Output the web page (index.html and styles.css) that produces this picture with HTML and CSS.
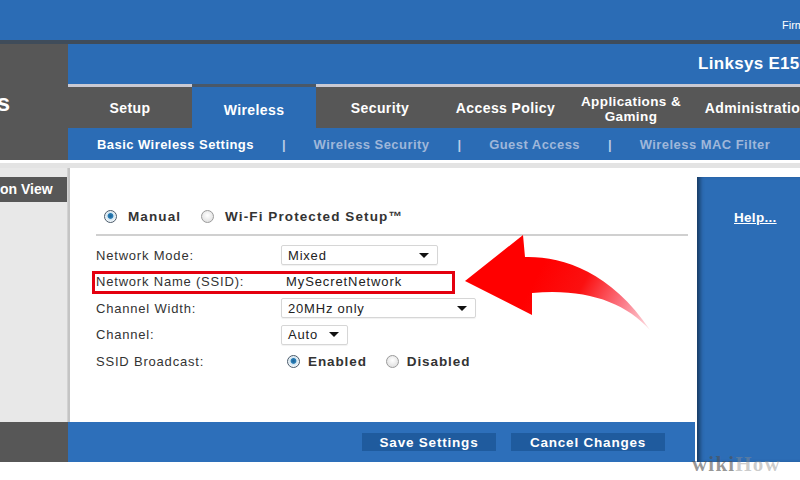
FILE: index.html
```html
<!DOCTYPE html>
<html lang="en">
<head>
    <meta charset="UTF-8">
    <meta name="viewport" content="width=device-width, initial-scale=1.0">
    <link rel="stylesheet" href="styles.css">
    <title>Basic Wireless Settings</title>
</head>
<body>
    <div class="page">
        <div class="topbar">
            <span class="firmware">Firmware Version: 1.0.00</span>
        </div>
        <div class="header">
            <div class="side-dark">
                <span class="side-title">Wireless</span>
            </div>
            <div class="header-main">
                <div class="model">Linksys E1500</div>
                <div class="tabs">
                    <div class="tab tab-setup">Setup</div>
                    <div class="tab tab-wireless active">Wireless</div>
                    <div class="tab tab-security">Security</div>
                    <div class="tab tab-access">Access Policy</div>
                    <div class="tab tab-apps">Applications &amp;<br>Gaming</div>
                    <div class="tab tab-admin">Administration</div>
                </div>
                <div class="subnav">
                    <span class="sub-item current">Basic Wireless Settings</span>
                    <span class="sep">|</span>
                    <span class="sub-item">Wireless Security</span>
                    <span class="sep">|</span>
                    <span class="sub-item">Guest Access</span>
                    <span class="sep">|</span>
                    <span class="sub-item">Wireless MAC Filter</span>
                </div>
            </div>
        </div>
        <div class="gap"></div>
        <div class="main">
            <div class="side-light">
                <div class="view-label">on View</div>
            </div>
            <div class="content">
                <div class="mode-row">
                    <span class="radio checked"></span>
                    <span class="radio-label">Manual</span>
                    <span class="radio wps"></span>
                    <span class="radio-label">Wi-Fi Protected Setup™</span>
                </div>
                <div class="rule"></div>
                <div class="form">
                    <div class="label">Network Mode:</div>
                    <div class="field"><div class="select w-mode"><span>Mixed</span><i class="caret"></i></div></div>

                    <div class="label">Network Name (SSID):</div>
                    <div class="field"><div class="text-input">MySecretNetwork</div></div>

                    <div class="label">Channel Width:</div>
                    <div class="field"><div class="select w-width"><span>20MHz only</span><i class="caret"></i></div></div>

                    <div class="label">Channel:</div>
                    <div class="field"><div class="select w-channel"><span>Auto</span><i class="caret"></i></div></div>

                    <div class="label">SSID Broadcast:</div>
                    <div class="field broadcast">
                        <span class="radio checked"></span>
                        <span class="radio-label">Enabled</span>
                        <span class="radio second"></span>
                        <span class="radio-label">Disabled</span>
                    </div>
                </div>
                <div class="highlight"></div>
                <svg class="arrow" width="200" height="110" viewBox="0 0 200 110">
                    <defs>
                        <linearGradient id="arrowFade" gradientUnits="userSpaceOnUse" x1="80" y1="40" x2="192" y2="100">
                            <stop offset="0" stop-color="#ff0000"/>
                            <stop offset="0.35" stop-color="#fb1010"/>
                            <stop offset="0.7" stop-color="#fb7a88"/>
                            <stop offset="1" stop-color="#fde6ea"/>
                        </linearGradient>
                    </defs>
                    <path d="M5,51 L63,5 L65,27 C100,26 150,40 190,100 C165,72 125,58 72,63 L72,85 Z" fill="url(#arrowFade)"/>
                </svg>
            </div>
            <div class="help">
                <a class="help-link">Help...</a>
            </div>
            <div class="side-foot"></div>
            <div class="footer">
                <div class="btn btn-save">Save Settings</div>
                <div class="btn btn-cancel">Cancel Changes</div>
            </div>
        </div>
        <div class="watermark"><span class="wm-wiki">wiki</span><span class="wm-how">How</span></div>
    </div>
</body>
</html>
```

FILE: styles.css
```css
body {
    margin: 0;
    padding: 0;
    background-color: #fff;
    font-family: "Liberation Sans", Arial, sans-serif;
    overflow: hidden;
}

.page {
    width: 800px;
    height: 480px;
    position: relative;
    overflow: hidden;
}

/* barra superior */
.topbar {
    height: 40px;
    background-color: #2b6cb5;
    border-bottom: 4px solid #3f4c5a;
    display: flex;
    align-items: flex-end;
    padding-left: 782px;
    white-space: nowrap;
}

.firmware {
    color: #fff;
    font-size: 11px;
    padding-bottom: 9px;
}

.header {
    display: flex;
    height: 116px;
}

.side-dark {
    width: 68px;
    flex-shrink: 0;
    background-color: #575757;
    display: flex;
    justify-content: flex-end;
    align-items: center;
    padding-right: 58px;
    box-sizing: border-box;
    overflow: hidden;
    white-space: nowrap;
}

.side-title {
    color: #fff;
    font-size: 24px;
    font-weight: bold;
    margin-top: 2px;
}

.header-main {
    flex: 1;
    min-width: 0;
}

.model {
    height: 40px;
    background-color: #2b6cb5;
    padding-left: 630px;
    display: flex;
    align-items: center;
    color: #fff;
    font-size: 17px;
    font-weight: bold;
    white-space: nowrap;
    letter-spacing: 0.3px;
}

.tabs {
    display: flex;
    height: 44px;
    background-color: #575757;
    white-space: nowrap;
}

.tab {
    flex-shrink: 0;
    box-sizing: border-box;
    border-top: 3px solid #c9c9d2;
    color: #fff;
    font-size: 14px;
    font-weight: bold;
    letter-spacing: 0.4px;
    display: flex;
    align-items: center;
    justify-content: center;
    text-align: center;
    line-height: 15px;
    padding-top: 1px;
}

.tab.active {
    background-color: #2b6cb5;
    border-top-color: #4a5868;
    padding-top: 6px;
}

.tab-setup { width: 124px; }
.tab-wireless { width: 124px; }
.tab-security { width: 128px; }
.tab-access { width: 123px; }
.tab-apps { width: 128px; font-size: 13.5px; padding-top: 3px; }
.tab-admin { width: 124px; }

.subnav {
    height: 32px;
    background-color: #2b6cb5;
    display: flex;
    align-items: center;
    gap: 28px;
    padding-left: 29px;
    font-size: 13px;
    font-weight: bold;
    white-space: nowrap;
}

.sub-item {
    color: #9fb7da;
    letter-spacing: 0.45px;
}

.sub-item.current {
    color: #fff;
}

.sep {
    color: #b9cbe6;
}

.gap {
    height: 8px;
    background: linear-gradient(#fff 0, #fff 3px, #e3e3e3 3px);
}

.main {
    display: grid;
    grid-template-columns: 68px 627px 1fr;
    grid-template-rows: 254px 40px;
}

.side-light {
    background-color: #e8e8e8;
    padding-top: 9px;
    border-right: 1px solid #d2d2d2;
}

.view-label {
    height: 25px;
    line-height: 25px;
    background-color: #575757;
    color: #fff;
    font-size: 14px;
    font-weight: bold;
    white-space: nowrap;
}

.content {
    background-color: #fff;
    border-left: 2px solid #c4c4c4;
    position: relative;
    padding-left: 26px;
    padding-right: 7px;
}

.mode-row {
    display: flex;
    align-items: center;
    height: 20px;
    margin-top: 38px;
    padding-left: 8px;
}

.radio {
    width: 13px;
    height: 13px;
    border-radius: 50%;
    box-sizing: border-box;
    border: 1px solid #9a9a9a;
    background: radial-gradient(circle at 50% 40%, #ffffff 0, #e4e4e4 70%);
    flex-shrink: 0;
}

.radio.checked {
    border-color: #4a5a6a;
    background: radial-gradient(circle at 50% 45%, #1a5f94 0, #2b7fb8 30%, #cfe3ef 40%, #f4f8fb 70%);
}

.radio-label {
    font-size: 13.5px;
    font-weight: bold;
    color: #333;
    letter-spacing: 1.1px;
    margin-left: 11px;
}

.radio.wps {
    margin-left: 20px;
}

.rule {
    height: 2px;
    background-color: #d0d0d0;
    margin-top: 8px;
}

.form {
    display: grid;
    grid-template-columns: 185px auto;
    grid-auto-rows: 26.5px;
    margin-top: 6px;
    align-items: center;
}

.label {
    font-size: 13px;
    color: #333;
    letter-spacing: 0.8px;
}

.field {
    display: flex;
    align-items: center;
}

.select {
    height: 20px;
    box-sizing: border-box;
    border: 1px solid #d6d6d6;
    border-radius: 2px;
    box-shadow: 0 1px 1px rgba(0, 0, 0, 0.06);
    padding: 0 8px 0 6px;
    display: flex;
    align-items: center;
    justify-content: space-between;
    font-size: 13px;
    color: #222;
    letter-spacing: 0.8px;
}

.w-mode { width: 157px; }
.w-width { width: 195px; }
.w-channel { width: 67px; }

.caret {
    width: 0;
    height: 0;
    border-left: 5px solid transparent;
    border-right: 5px solid transparent;
    border-top: 5px solid #111;
}

.text-input {
    width: 168px;
    height: 20px;
    line-height: 20px;
    padding-left: 5px;
    font-size: 13px;
    color: #222;
    letter-spacing: 0.9px;
}

.broadcast {
    padding-left: 6px;
}

.broadcast .radio-label {
    margin-left: 8px;
    letter-spacing: 0.9px;
}

.radio.second {
    margin-left: 19px;
}

/* anotaciones sobre la captura */
.highlight {
    position: absolute;
    left: 22px;
    top: 103px;
    width: 363px;
    height: 23px;
    box-sizing: border-box;
    border: 3px solid #e4000f;
}

.arrow {
    position: absolute;
    left: 390px;
    top: 62px;
}

.help {
    grid-row: 1 / span 2;
    grid-column: 3;
    margin-top: 9px;
    margin-left: 2px;
    background-color: #2c6db6;
    box-shadow: inset 5px 0 4px -2px #183a62;
    padding-top: 31px;
    padding-left: 37px;
}

.help-link {
    color: #fff;
    font-size: 13.5px;
    font-weight: bold;
    text-decoration: underline;
    letter-spacing: 0.3px;
}

.side-foot {
    background-color: #575757;
}

.footer {
    background-color: #2d6fba;
    display: flex;
    align-items: center;
    padding-left: 294px;
    gap: 15px;
}

.btn {
    height: 18px;
    background-color: #1f5b9e;
    color: #fff;
    font-size: 13.5px;
    font-weight: bold;
    letter-spacing: 0.8px;
    display: flex;
    align-items: center;
    justify-content: center;
}

.btn-save { width: 134px; }
.btn-cancel { width: 154px; }

.watermark {
    position: absolute;
    left: 692px;
    top: 452px;
    font-family: "Liberation Serif", serif;
    font-size: 21px;
    font-weight: bold;
    letter-spacing: 1.2px;
}

.wm-wiki {
    color: rgba(80, 80, 80, 0.6);
}

.wm-how {
    color: rgba(140, 140, 140, 0.45);
}
```
